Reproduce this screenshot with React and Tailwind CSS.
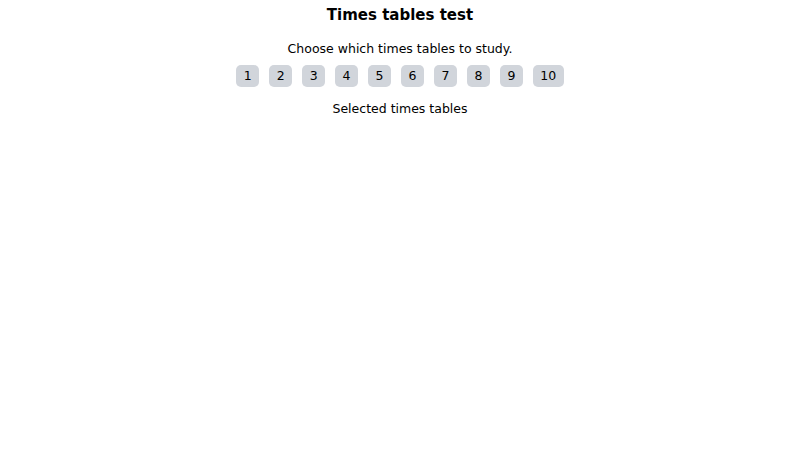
import React from 'react';

const tables = [1, 2, 3, 4, 5, 6, 7, 8, 9, 10];

export default function App() {
  return (
    <div className="min-h-[450px] bg-white text-black flex flex-col items-center font-['DejaVu_Sans',sans-serif]">
      <h1 className="mt-[5px] text-[15px] leading-[20px] font-bold">Times tables test</h1>
      <p className="mt-[16px] text-[12.5px] leading-[16px]">Choose which times tables to study.</p>
      <div className="mt-[8px] flex gap-[10px]">
        {tables.map((n) => (
          <button
            key={n}
            className="h-[22px] px-[7.5px] rounded-[5px] bg-[#d1d5db] text-[12.5px] leading-[16px]"
          >
            {n}
          </button>
        ))}
      </div>
      <p className="mt-[14px] text-[12.5px] leading-[16px]">Selected times tables</p>
    </div>
  );
}
